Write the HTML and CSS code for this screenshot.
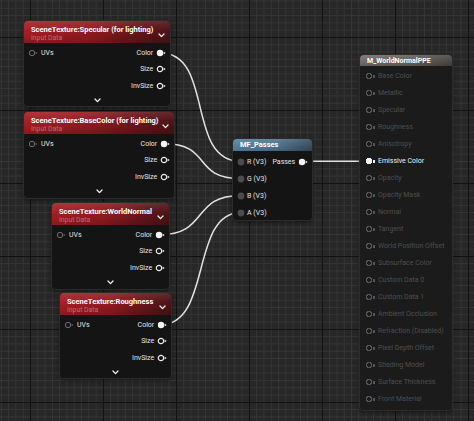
FILE: index.html
```html
<!DOCTYPE html>
<html>
<head>
<meta charset="utf-8">
<title>M_WorldNormalPPE</title>
<link rel="stylesheet" href="styles.css">
</head>
<body>
<div class="graph">
  <svg class="wires" width="474" height="421" viewBox="0 0 474 421">
    <path d="M159.7 52.75 C215 52.75 185 161.5 241 161.5"/>
    <path d="M163.7 143.75 C213 143.75 191 178.5 241 178.5"/>
    <path d="M158.7 234.75 C210 234.75 190 195.5 241 195.5"/>
    <path d="M160.7 324.75 C212 324.75 190 212.5 241 212.5"/>
    <path d="M302 161.25 L369 161.25"/>
  </svg>

  <!-- SceneTexture: Specular -->
  <div class="node st n1">
    <div class="hdr red">
      <div class="titles"><div class="title">SceneTexture:Specular (for lighting)</div><div class="sub">Input Data</div></div>
      <svg class="chev" width="7" height="5" viewBox="0 0 7 5"><polyline points="1,1 3.5,3.6 6,1"/></svg>
    </div>
    <div class="body">
      <div class="cols">
        <div class="ins">
          <div class="row"><svg class="pin" width="10" height="8" viewBox="0 0 10 8"><circle class="hollow dim" cx="4" cy="4" r="2.7"/><path class="arrow dim" d="M7.6 2.7 9.4 4 7.6 5.3z"/></svg><span>UVs</span></div>
        </div>
        <div class="outs">
          <div class="row"><span>Color</span><svg class="pin" width="10" height="8" viewBox="0 0 10 8"><circle class="fill" cx="4" cy="4" r="3.2"/><path class="arrow" d="M7.6 2.6 9.6 4 7.6 5.4z"/></svg></div>
          <div class="row"><span>Size</span><svg class="pin" width="10" height="8" viewBox="0 0 10 8"><circle class="hollow" cx="4" cy="4" r="2.7"/><path class="arrow" d="M7.6 2.6 9.6 4 7.6 5.4z"/></svg></div>
          <div class="row"><span>InvSize</span><svg class="pin" width="10" height="8" viewBox="0 0 10 8"><circle class="hollow" cx="4" cy="4" r="2.7"/><path class="arrow" d="M7.6 2.6 9.6 4 7.6 5.4z"/></svg></div>
        </div>
      </div>
      <div class="more"><svg class="chev" width="7" height="5" viewBox="0 0 7 5"><polyline points="1,1 3.5,3.6 6,1"/></svg></div>
    </div>
  </div>

  <!-- SceneTexture: BaseColor -->
  <div class="node st n2">
    <div class="hdr red">
      <div class="titles"><div class="title">SceneTexture:BaseColor (for lighting)</div><div class="sub">Input Data</div></div>
      <svg class="chev" width="7" height="5" viewBox="0 0 7 5"><polyline points="1,1 3.5,3.6 6,1"/></svg>
    </div>
    <div class="body">
      <div class="cols">
        <div class="ins">
          <div class="row"><svg class="pin" width="10" height="8" viewBox="0 0 10 8"><circle class="hollow dim" cx="4" cy="4" r="2.7"/><path class="arrow dim" d="M7.6 2.7 9.4 4 7.6 5.3z"/></svg><span>UVs</span></div>
        </div>
        <div class="outs">
          <div class="row"><span>Color</span><svg class="pin" width="10" height="8" viewBox="0 0 10 8"><circle class="fill" cx="4" cy="4" r="3.2"/><path class="arrow" d="M7.6 2.6 9.6 4 7.6 5.4z"/></svg></div>
          <div class="row"><span>Size</span><svg class="pin" width="10" height="8" viewBox="0 0 10 8"><circle class="hollow" cx="4" cy="4" r="2.7"/><path class="arrow" d="M7.6 2.6 9.6 4 7.6 5.4z"/></svg></div>
          <div class="row"><span>InvSize</span><svg class="pin" width="10" height="8" viewBox="0 0 10 8"><circle class="hollow" cx="4" cy="4" r="2.7"/><path class="arrow" d="M7.6 2.6 9.6 4 7.6 5.4z"/></svg></div>
        </div>
      </div>
      <div class="more"><svg class="chev" width="7" height="5" viewBox="0 0 7 5"><polyline points="1,1 3.5,3.6 6,1"/></svg></div>
    </div>
  </div>

  <!-- SceneTexture: WorldNormal -->
  <div class="node st n3">
    <div class="hdr red">
      <div class="titles"><div class="title">SceneTexture:WorldNormal</div><div class="sub">Input Data</div></div>
      <svg class="chev" width="7" height="5" viewBox="0 0 7 5"><polyline points="1,1 3.5,3.6 6,1"/></svg>
    </div>
    <div class="body">
      <div class="cols">
        <div class="ins">
          <div class="row"><svg class="pin" width="10" height="8" viewBox="0 0 10 8"><circle class="hollow dim" cx="4" cy="4" r="2.7"/><path class="arrow dim" d="M7.6 2.7 9.4 4 7.6 5.3z"/></svg><span>UVs</span></div>
        </div>
        <div class="outs">
          <div class="row"><span>Color</span><svg class="pin" width="10" height="8" viewBox="0 0 10 8"><circle class="fill" cx="4" cy="4" r="3.2"/><path class="arrow" d="M7.6 2.6 9.6 4 7.6 5.4z"/></svg></div>
          <div class="row"><span>Size</span><svg class="pin" width="10" height="8" viewBox="0 0 10 8"><circle class="hollow" cx="4" cy="4" r="2.7"/><path class="arrow" d="M7.6 2.6 9.6 4 7.6 5.4z"/></svg></div>
          <div class="row"><span>InvSize</span><svg class="pin" width="10" height="8" viewBox="0 0 10 8"><circle class="hollow" cx="4" cy="4" r="2.7"/><path class="arrow" d="M7.6 2.6 9.6 4 7.6 5.4z"/></svg></div>
        </div>
      </div>
      <div class="more"><svg class="chev" width="7" height="5" viewBox="0 0 7 5"><polyline points="1,1 3.5,3.6 6,1"/></svg></div>
    </div>
  </div>

  <!-- SceneTexture: Roughness -->
  <div class="node st n4">
    <div class="hdr red">
      <div class="titles"><div class="title">SceneTexture:Roughness</div><div class="sub">Input Data</div></div>
      <svg class="chev" width="7" height="5" viewBox="0 0 7 5"><polyline points="1,1 3.5,3.6 6,1"/></svg>
    </div>
    <div class="body">
      <div class="cols">
        <div class="ins">
          <div class="row"><svg class="pin" width="10" height="8" viewBox="0 0 10 8"><circle class="hollow dim" cx="4" cy="4" r="2.7"/><path class="arrow dim" d="M7.6 2.7 9.4 4 7.6 5.3z"/></svg><span>UVs</span></div>
        </div>
        <div class="outs">
          <div class="row"><span>Color</span><svg class="pin" width="10" height="8" viewBox="0 0 10 8"><circle class="fill" cx="4" cy="4" r="3.2"/><path class="arrow" d="M7.6 2.6 9.6 4 7.6 5.4z"/></svg></div>
          <div class="row"><span>Size</span><svg class="pin" width="10" height="8" viewBox="0 0 10 8"><circle class="hollow" cx="4" cy="4" r="2.7"/><path class="arrow" d="M7.6 2.6 9.6 4 7.6 5.4z"/></svg></div>
          <div class="row"><span>InvSize</span><svg class="pin" width="10" height="8" viewBox="0 0 10 8"><circle class="hollow" cx="4" cy="4" r="2.7"/><path class="arrow" d="M7.6 2.6 9.6 4 7.6 5.4z"/></svg></div>
        </div>
      </div>
      <div class="more"><svg class="chev" width="7" height="5" viewBox="0 0 7 5"><polyline points="1,1 3.5,3.6 6,1"/></svg></div>
    </div>
  </div>

  <!-- Material function: MF_Passes -->
  <div class="node mf">
    <div class="hdr blue"><div class="title">MF_Passes</div></div>
    <div class="body">
      <div class="cols">
        <div class="ins">
          <div class="row"><svg class="pin" width="8" height="8" viewBox="0 0 8 8"><circle class="gray" cx="4" cy="4" r="3.4"/></svg><span>R (V3)</span></div>
          <div class="row"><svg class="pin" width="8" height="8" viewBox="0 0 8 8"><circle class="gray" cx="4" cy="4" r="3.4"/></svg><span>G (V3)</span></div>
          <div class="row"><svg class="pin" width="8" height="8" viewBox="0 0 8 8"><circle class="gray" cx="4" cy="4" r="3.4"/></svg><span>B (V3)</span></div>
          <div class="row"><svg class="pin" width="8" height="8" viewBox="0 0 8 8"><circle class="gray" cx="4" cy="4" r="3.4"/></svg><span>A (V3)</span></div>
        </div>
        <div class="outs">
          <div class="row"><span>Passes</span><svg class="pin" width="10" height="8" viewBox="0 0 10 8"><circle class="fill" cx="4" cy="4" r="3.2"/><path class="arrow" d="M7.6 2.6 9.6 4 7.6 5.4z"/></svg></div>
        </div>
      </div>
    </div>
  </div>

  <!-- Material result node -->
  <div class="node result">
    <div class="hdr stone"><div class="title">M_WorldNormalPPE</div></div>
    <div class="body">
      <ul class="inputs">
        <li class="off">Base Color</li>
        <li class="off">Metallic</li>
        <li class="off">Specular</li>
        <li class="off">Roughness</li>
        <li class="off">Anisotropy</li>
        <li class="on">Emissive Color</li>
        <li class="off">Opacity</li>
        <li class="off">Opacity Mask</li>
        <li class="off">Normal</li>
        <li class="off">Tangent</li>
        <li class="off">World Position Offset</li>
        <li class="off">Subsurface Color</li>
        <li class="off">Custom Data 0</li>
        <li class="off">Custom Data 1</li>
        <li class="off">Ambient Occlusion</li>
        <li class="off">Refraction (Disabled)</li>
        <li class="off">Pixel Depth Offset</li>
        <li class="off">Shading Model</li>
        <li class="off">Surface Thickness</li>
        <li class="off">Front Material</li>
      </ul>
    </div>
  </div>
</div>
</body>
</html>
```

FILE: styles.css
```css
html, body {
  margin: 0;
  padding: 0;
  background: #272727;
}

.graph {
  position: relative;
  width: 474px;
  height: 421px;
  overflow: hidden;
  font-family: Roboto, "Liberation Sans", sans-serif;
  background-color: #272727;
  background-image:
    linear-gradient(to right, #121212 1px, transparent 1px),
    linear-gradient(to bottom, #121212 1px, transparent 1px),
    linear-gradient(to right, #353535 1px, transparent 1px),
    linear-gradient(to bottom, #353535 1px, transparent 1px);
  background-size: 73px 73px, 73px 73px, 7.3px 7.3px, 7.3px 7.3px;
  background-position: 30px 37px, 30px 37px, 30px 37px, 30px 37px;
}

/* connection wires sit under the nodes */
.wires {
  position: absolute;
  left: 0;
  top: 0;
}
.wires path {
  fill: none;
  stroke: #e2e2e2;
  stroke-width: 1.5;
}

/* ---------- generic node ---------- */
.node {
  position: absolute;
  box-sizing: border-box;
  display: flex;
  flex-direction: column;
  background: #141414;
  border-radius: 4px;
  box-shadow: 0 0 0 1px #2c2c2c, 0 2px 5px rgba(0, 0, 0, 0.55);
  color: #e6e6e6;
  font-size: 7px;
}

.hdr {
  display: flex;
  align-items: flex-start;
  justify-content: space-between;
  border-radius: 4px 4px 0 0;
  flex: none;
}
.title {
  font-weight: 700;
  font-size: 7.5px;
  line-height: 8px;
  color: #fff;
  white-space: nowrap;
}
.sub {
  font-size: 6.8px;
  line-height: 8px;
  color: #c66a6a;
  white-space: nowrap;
}

.chev polyline {
  fill: none;
  stroke: #f2f2f2;
  stroke-width: 1.3;
  stroke-linecap: round;
  stroke-linejoin: round;
}

.hdr.red {
  height: 22px;
  padding: 5px 0 0 7px;
  box-sizing: border-box;
  background:
    linear-gradient(180deg, rgba(255, 255, 255, 0.10), rgba(255, 255, 255, 0) 45%, rgba(0, 0, 0, 0.18)),
    linear-gradient(90deg, #a81e26 0%, #931b21 45%, #631519 80%, #4c1316 100%);
}
.hdr.red .chev {
  margin: 7px 5px 0 0;
}

.hdr.blue {
  height: 12px;
  padding-left: 7px;
  align-items: center;
  background:
    linear-gradient(180deg, rgba(255, 255, 255, 0.12), rgba(0, 0, 0, 0.1)),
    linear-gradient(90deg, #5381a0 0%, #4a7290 55%, #33485a 100%);
}
.hdr.stone {
  height: 11px;
  padding-left: 7px;
  align-items: center;
  background:
    linear-gradient(180deg, rgba(255, 255, 255, 0.12), rgba(0, 0, 0, 0.12)),
    linear-gradient(90deg, #726c66 0%, #635e59 55%, #45423f 100%);
}
.hdr.stone .title { font-size: 7px; }

.body {
  display: flex;
  flex-direction: column;
  flex: 1;
}
.cols {
  display: flex;
  justify-content: space-between;
}
.ins, .outs {
  display: flex;
  flex-direction: column;
}
.ins { padding-left: 4px; }
.outs { padding-right: 4.3px; align-items: flex-end; }

.row {
  display: flex;
  align-items: center;
  gap: 3px;
  white-space: nowrap;
}
.outs .row { gap: 2.5px; }

.pin { flex: none; display: block; }
.pin .fill { fill: #f4f4f4; }
.pin .hollow { fill: none; stroke: #eeeeee; stroke-width: 1.2; }
.pin .arrow { fill: #eeeeee; }
.pin .hollow.dim { fill: #161616; stroke: #6e6e6e; stroke-width: 1; }
.pin .arrow.dim { fill: #6e6e6e; }
.pin .gray { fill: #4b4b4b; }

/* ---------- scene texture nodes ---------- */
.st .body { padding-top: 1.5px; }
.st .row { height: 16.5px; }
.st .more {
  display: flex;
  justify-content: center;
  padding-top: 4px;
}

.n1 { left: 24px; top: 21px; width: 146px; height: 85px; }
.n2 { left: 24px; top: 112px; width: 150px; height: 86px; }
.n3 { left: 52px; top: 203px; width: 117px; height: 86px; }
.n4 { left: 60px; top: 293px; width: 111px; height: 85px; }

/* ---------- material function ---------- */
.mf { left: 233px; top: 139px; width: 79px; height: 81px; }
.mf .body { padding-top: 2px; }
.mf .row { height: 17px; }
.mf .ins .row { gap: 2px; }

/* ---------- material result ---------- */
.result {
  left: 360px;
  top: 55px;
  width: 92px;
  height: 355px;
  background: #1b1b1b;
}
.inputs {
  list-style: none;
  margin: 0;
  padding: 1.5px 0 0 5px;
}
.inputs li {
  display: flex;
  align-items: center;
  gap: 3px;
  height: 17px;
  white-space: nowrap;
}
.inputs li::before {
  content: "";
  flex: none;
  width: 10px;
  height: 8px;
  background-repeat: no-repeat;
}
.inputs li.off { color: #4e4e4e; }
.inputs li.off::before {
  background-image:
    radial-gradient(circle at 4px 4px, transparent 1.9px, #555 2.1px, #555 3px, transparent 3.3px),
    linear-gradient(#555, #555);
  background-size: 10px 8px, 2px 3px;
  background-position: 0 0, 7.6px 2.5px;
}
.inputs li.on { color: #f0f0f0; }
.inputs li.on::before {
  background-image:
    radial-gradient(circle at 4px 4px, #f4f4f4 3px, transparent 3.3px),
    linear-gradient(#f4f4f4, #f4f4f4);
  background-size: 10px 8px, 2px 3px;
  background-position: 0 0, 7.6px 2.5px;
}
```
